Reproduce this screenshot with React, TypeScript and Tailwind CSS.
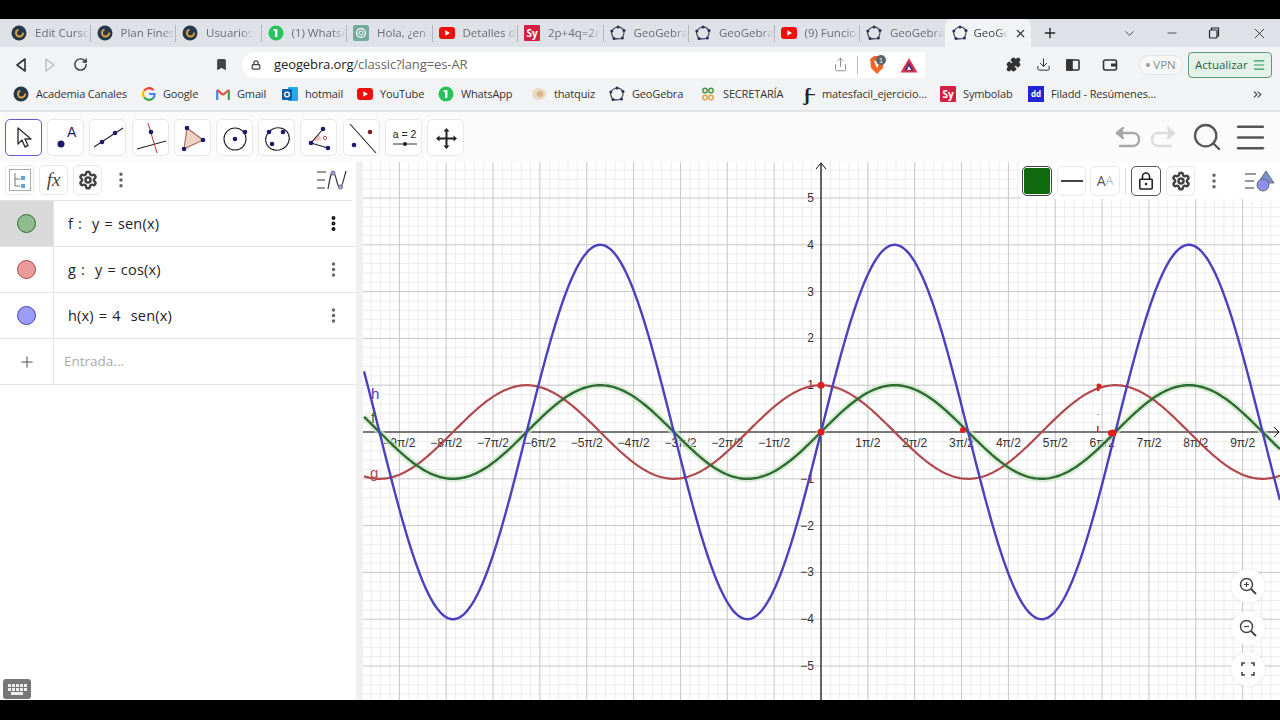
import { ChevronDown, Download, MoreVertical, Plus, Puzzle, RotateCw, Share, X, Minus, Lock, Bookmark, ChevronsRight, Menu, Search, Settings } from 'lucide-react'

const GEO = '#1a1a6e'

function AcademiaIcon() {
  return (
    <svg width="16" height="16" viewBox="0 0 16 16" className="shrink-0">
      <circle cx="8" cy="8" r="7.5" fill="#26384a" />
      <circle cx="8.5" cy="8" r="3.5" fill="none" stroke="#d9a441" strokeWidth="2" strokeDasharray="15 6" />
    </svg>
  )
}

function WhatsappIcon() {
  return (
    <svg width="16" height="16" viewBox="0 0 16 16" className="shrink-0">
      <circle cx="8" cy="8" r="7.5" fill="#25c35a" />
      <rect x="7" y="4" width="2.4" height="8" fill="#fff" />
      <rect x="5.6" y="4" width="3" height="2" fill="#fff" />
    </svg>
  )
}

function ChatIcon() {
  return (
    <svg width="16" height="16" viewBox="0 0 16 16" className="shrink-0">
      <rect width="16" height="16" rx="2" fill="#74aa9c" />
      <circle cx="8" cy="8" r="4.4" fill="none" stroke="#fff" strokeWidth="1.3" />
      <circle cx="8" cy="8" r="2" fill="none" stroke="#fff" strokeWidth="0.9" />
    </svg>
  )
}

function YoutubeIcon() {
  return (
    <svg width="16" height="12" viewBox="0 0 16 12" className="shrink-0">
      <rect width="16" height="12" rx="3" fill="#ee0f0f" />
      <path d="M6.3 3.3 L11 6 L6.3 8.7 Z" fill="#fff" />
    </svg>
  )
}

function SyIcon() {
  return (
    <div className="flex h-4 w-4 shrink-0 items-center justify-center rounded-[1px] bg-[#d41f45] text-[10px] font-bold leading-none text-white">
      Sy
    </div>
  )
}

function GeoIcon() {
  return (
    <svg width="16" height="16" viewBox="0 0 16 16" className="shrink-0">
      <path d="M8 1.8 Q11.5 2 14 5.4 Q14.5 9.5 12.4 13 Q8 14.6 4 13.4 Q1 10 1.8 6 Q4 2.6 8 1.8 Z" fill="none" stroke="#3b3f4a" strokeWidth="1.1" />
      <circle cx="8" cy="1.9" r="1.5" fill="#26305e" />
      <circle cx="14" cy="5.4" r="1.5" fill="#26305e" />
      <circle cx="12.4" cy="13" r="1.5" fill="#26305e" />
      <circle cx="4" cy="13.4" r="1.5" fill="#26305e" />
      <circle cx="1.8" cy="6" r="1.5" fill="#26305e" />
    </svg>
  )
}

function GoogleIcon() {
  return (
    <svg width="14" height="14" viewBox="0 0 14 14" className="shrink-0" fill="none" strokeWidth="2.2">
      <path d="M11.5 3 A6 6 0 0 0 2.2 3.6" stroke="#ea4335" />
      <path d="M2.2 3.6 A6 6 0 0 0 2.2 10.4" stroke="#fbbc05" />
      <path d="M2.2 10.4 A6 6 0 0 0 11 11.4" stroke="#34a853" />
      <path d="M11 11.4 A6 6 0 0 0 12.6 7 L7 7" stroke="#4285f4" />
    </svg>
  )
}

function GmailIcon() {
  return (
    <svg width="14" height="12" viewBox="0 0 14 12" className="shrink-0" fill="none" strokeWidth="2.2">
      <path d="M1.2 12 V2" stroke="#4285f4" />
      <path d="M12.8 12 V2" stroke="#34a853" />
      <path d="M1.2 2 L7 6.8" stroke="#ea4335" />
      <path d="M7 6.8 L12.8 2" stroke="#e0574a" />
    </svg>
  )
}

function OutlookIcon() {
  return (
    <svg width="16" height="16" viewBox="0 0 16 16" className="shrink-0">
      <rect x="6" y="1" width="10" height="14" rx="1" fill="#28a8ea" />
      <rect x="0" y="3" width="10" height="11" rx="1" fill="#0f5ea8" />
      <circle cx="5" cy="8.5" r="2.4" fill="none" stroke="#fff" strokeWidth="1.3" />
    </svg>
  )
}

function QuizIcon() {
  return (
    <svg width="16" height="14" viewBox="0 0 16 14" className="shrink-0">
      <ellipse cx="8" cy="7" rx="7" ry="6" fill="#ecd9c2" />
      <ellipse cx="9" cy="7" rx="3.4" ry="3" fill="#d7b48e" />
    </svg>
  )
}

function SecretariaIcon() {
  return (
    <svg width="16" height="16" viewBox="0 0 16 16" className="shrink-0" fill="none" strokeWidth="1.4">
      <circle cx="5" cy="4.5" r="2.2" stroke="#4a8f3b" />
      <circle cx="11" cy="4.5" r="2.2" stroke="#4a8f3b" />
      <circle cx="5" cy="11.5" r="2.2" stroke="#d9a441" />
      <circle cx="11" cy="11.5" r="2.2" stroke="#d9a441" />
    </svg>
  )
}

function MatesIcon() {
  return <span className="w-4 shrink-0 text-center font-['Liberation_Serif',serif] text-[19px] font-bold leading-none text-[#222]">ʃ̶</span>
}

function FiladdIcon() {
  return (
    <div className="flex h-4 w-4 shrink-0 items-center justify-center bg-[#2323d8] text-[8px] font-bold leading-none text-white">
      dd
    </div>
  )
}

const tabs = [
  { icon: <AcademiaIcon />, label: 'Edit Curso de' },
  { icon: <AcademiaIcon />, label: 'Plan Fines 2' },
  { icon: <AcademiaIcon />, label: 'Usuarios' },
  { icon: <WhatsappIcon />, label: '(1) WhatsApp' },
  { icon: <ChatIcon />, label: 'Hola, ¿en qué' },
  { icon: <YoutubeIcon />, label: 'Detalles del' },
  { icon: <SyIcon />, label: '2p+4q=2r' },
  { icon: <GeoIcon />, label: 'GeoGebra C' },
  { icon: <GeoIcon />, label: 'GeoGebra C' },
  { icon: <YoutubeIcon />, label: '(9) Funcion' },
  { icon: <GeoIcon />, label: 'GeoGebra C' },
]

const bookmarks = [
  { icon: <AcademiaIcon />, label: 'Academia Canales', w: 'w-[129px]' },
  { icon: <GoogleIcon />, label: 'Google', w: 'w-[74px]' },
  { icon: <GmailIcon />, label: 'Gmail', w: 'w-[66px]' },
  { icon: <OutlookIcon />, label: 'hotmail', w: 'w-[75px]' },
  { icon: <YoutubeIcon />, label: 'YouTube', w: 'w-[81px]' },
  { icon: <WhatsappIcon />, label: 'WhatsApp', w: 'w-[93px]' },
  { icon: <QuizIcon />, label: 'thatquiz', w: 'w-[78px]' },
  { icon: <GeoIcon />, label: 'GeoGebra', w: 'w-[91px]' },
  { icon: <SecretariaIcon />, label: 'SECRETARÍA', w: 'w-[99px]' },
  { icon: <MatesIcon />, label: 'matesfacil_ejercicio...', w: 'w-[141px]' },
  { icon: <SyIcon />, label: 'Symbolab', w: 'w-[88px]' },
  { icon: <FiladdIcon />, label: 'Filadd - Resúmenes...', w: 'w-[200px]' },
]

function TabBar() {
  return (
    <div className="flex h-[28px] items-center bg-[#dee1e6] pl-[5px] text-[11.5px] text-[#6a6d72]">
      {tabs.map((t, i) => (
        <div key={i} className="flex h-[17px] w-[85.5px] items-center gap-[8px] overflow-hidden border-r border-[#b4b7bb] pl-[6px]">
          {t.icon}
          <span className="overflow-hidden whitespace-nowrap [mask-image:linear-gradient(to_right,#000_75%,transparent)]">{t.label}</span>
        </div>
      ))}
      <div className="ml-[-1px] flex h-[28px] w-[86px] items-center gap-[6px] rounded-t-[7px] bg-[#f2f3f5] pl-[7px] text-[#444]">
        <GeoIcon />
        <span className="w-[34px] overflow-hidden whitespace-nowrap [mask-image:linear-gradient(to_right,#000_70%,transparent)]">GeoGebra</span>
        <X size={13} strokeWidth={2} className="text-[#333]" />
      </div>
      <Plus size={16} strokeWidth={2} className="ml-[11px] text-[#222]" />
      <ChevronDown size={15} strokeWidth={1.5} className="ml-[64px] text-[#444]" />
      <Minus size={14} strokeWidth={1.3} className="ml-[28px] text-[#222]" />
      <svg width="12" height="12" viewBox="0 0 12 12" className="ml-[29px]" fill="none" stroke="#222" strokeWidth="1.2">
        <rect x="1.5" y="3" width="7.5" height="8" rx="1" />
        <path d="M3.5 3 V1 H10.5 V9 H9" />
      </svg>
      <X size={17} strokeWidth={1.2} className="ml-[31px] text-[#222]" />
    </div>
  )
}

function NavBar() {
  return (
    <div className="flex h-[35px] items-center bg-[#f2f3f5] text-[#333]">
      <svg width="14" height="16" viewBox="0 0 14 16" className="ml-[14px]" fill="none" stroke="#333" strokeWidth="1.6" strokeLinejoin="round">
        <path d="M11 2 L3 8 L11 14 Z" />
      </svg>
      <svg width="14" height="16" viewBox="0 0 14 16" className="ml-[15px]" fill="none" stroke="#bbbdc0" strokeWidth="1.4" strokeLinejoin="round">
        <path d="M3 2 L11 8 L3 14 Z" />
      </svg>
      <RotateCw size={15} strokeWidth={2.2} className="ml-[16px] text-[#333]" />
      <Bookmark size={13} strokeWidth={2} fill="#444" className="ml-[127px] text-[#444]" />
      <div className="ml-[14px] flex h-[26px] w-[683px] shrink-0 items-center rounded-l-[13px] bg-white pl-[9px]">
        <Lock size={10} strokeWidth={3} className="text-[#444]" />
        <span className="ml-[13px] text-[13px] tracking-[-0.1px] text-[#222]">geogebra.org</span>
        <span className="text-[13px] tracking-[-0.1px] text-[#666]">/classic?lang=es-AR</span>
        <Share size={15} strokeWidth={1.3} className="ml-[366px] text-[#777]" />
        <div className="ml-[9px] h-[18px] w-px bg-[#bbb]" />
        <svg width="18" height="20" viewBox="0 0 18 20" className="ml-[10px]">
          <path d="M2 4 L6 1 H12 L16 4 L15 13 L9 19 L3 13 Z" fill="#f0662a" />
          <path d="M6 6 L9 13 L12 6 Z" fill="#fff" />
          <circle cx="13" cy="5" r="5" fill="#5f6368" />
          <text x="13" y="7.5" fontSize="7" fill="#fff" textAnchor="middle" fontFamily="Liberation Sans">1</text>
        </svg>
        <svg width="18" height="16" viewBox="0 0 18 16" className="ml-[14px]">
          <path d="M9 1 L17.5 15.5 H0.5 Z" fill="#d9334a" />
          <path d="M9 5.5 L13.6 13.5 H4.4 Z" fill="#4b2a80" />
          <path d="M9 9 L11 13 H7 Z" fill="#f2f3f5" />
        </svg>
      </div>
      <Puzzle size={15} strokeWidth={2} fill="#333" className="ml-[81px]" />
      <Download size={15} strokeWidth={1.6} className="ml-[15px]" />
      <svg width="14" height="14" viewBox="0 0 14 14" className="ml-[15px]" fill="none" stroke="#333" strokeWidth="1.6">
        <rect x="1" y="2" width="12" height="10" rx="1" />
        <rect x="1" y="2" width="5" height="10" fill="#333" />
      </svg>
      <svg width="16" height="14" viewBox="0 0 16 14" className="ml-[22px]" fill="none" stroke="#333" strokeWidth="1.6">
        <rect x="1.5" y="2" width="13" height="10" rx="2" />
        <path d="M9 7 H14.5" strokeWidth="3" />
      </svg>
      <div className="ml-[21px] flex h-[20px] w-[44px] items-center justify-center gap-[3px] rounded-full border border-[#e2e3e5] bg-[#f7f7f8] text-[11.5px] text-[#8a8d91]">
        <span className="h-[4px] w-[4px] rounded-full bg-[#9a9da1]" />
        VPN
      </div>
      <div className="ml-[5px] flex h-[26px] w-[84px] items-center justify-between rounded-[4px] border border-[#5f9a78] bg-[#e3f1e8] pl-[6px] pr-[5px] text-[11.5px] text-[#2f5e44]">
        Actualizar
        <Menu size={14} strokeWidth={2} className="text-[#2d9b5c]" />
      </div>
    </div>
  )
}

function BookmarkBar() {
  return (
    <div className="flex h-[28px] items-center bg-[#f2f3f5] pb-[4px] pl-[13px] text-[11px] tracking-[-0.15px] text-[#333]">
      {bookmarks.map((b, i) => (
        <div key={i} className={`flex items-center gap-[7px] ${b.w} shrink-0`}>
          {b.icon}
          <span className="whitespace-nowrap">{b.label}</span>
        </div>
      ))}
      <ChevronsRight size={13} strokeWidth={2} className="ml-[23px] text-[#444]" />
    </div>
  )
}

function Dot({ cx, cy, r = 3, fill = GEO }: { cx: number; cy: number; r?: number; fill?: string }) {
  return <circle cx={cx} cy={cy} r={r} fill={fill} />
}

function ToolIcon({ n }: { n: number }) {
  const line = { stroke: '#222', strokeWidth: 1.1, fill: 'none' }
  return (
    <svg width="37" height="37" viewBox="0 0 37 37">
      {n === 0 && <path d="M12 8 L12 24 L16 20 L19 27 L22 25.5 L19 19 L25 19 Z" fill="#fff" stroke="#333" strokeWidth="1.4" strokeLinejoin="round" />}
      {n === 1 && (
        <>
          <Dot cx={13} cy={24} r={3.5} />
          <text x="19" y="17" fontSize="14" fill={GEO} fontFamily="Liberation Sans">A</text>
        </>
      )}
      {n === 2 && (
        <>
          <path d="M4 27 L33 8" {...line} />
          <Dot cx={12} cy={22} r={2.3} />
          <Dot cx={25} cy={13} r={2.3} />
        </>
      )}
      {n === 3 && (
        <>
          <path d="M4 29 L33 21" {...line} />
          <path d="M15 3 L24 33" stroke="#c0504d" strokeWidth="1.1" />
          <Dot cx={18} cy={12} r={2.3} />
        </>
      )}
      {n === 4 && (
        <>
          <path d="M12 8 L28 20 L9 29 Z" fill="#eed2c4" stroke="#a9674f" strokeWidth="1.1" />
          <Dot cx={12} cy={8} r={2.3} />
          <Dot cx={28} cy={20} r={2.3} />
          <Dot cx={9} cy={29} r={2.3} />
        </>
      )}
      {n === 5 && (
        <>
          <circle cx="18" cy="19" r="11" {...line} />
          <Dot cx={18} cy={19} r={2.3} />
          <Dot cx={28} cy={12} r={2.3} />
        </>
      )}
      {n === 6 && (
        <>
          <ellipse cx="18.5" cy="19" rx="12" ry="11" transform="rotate(-25 18.5 19)" {...line} />
          <Dot cx={10} cy={12} r={2.3} />
          <Dot cx={24} cy={12} r={2.3} />
          <Dot cx={13} cy={24} r={2.3} />
        </>
      )}
      {n === 7 && (
        <>
          <path d="M10 22 L20 20 A10 10 0 0 0 18 14 Z" fill="#f4c0bc" />
          <path d="M22 9 L10 23 L27 28" {...line} />
          <circle cx="24" cy="18" r="1.7" fill="none" stroke="#c0504d" strokeWidth="1" />
          <Dot cx={22} cy={9} r={2.3} />
          <Dot cx={10} cy={23} r={2.3} />
          <Dot cx={27} cy={28} r={2.3} />
        </>
      )}
      {n === 8 && (
        <>
          <path d="M6 4 L32 33" {...line} />
          <Dot cx={26} cy={12} r={2.3} fill="#7d1f2a" />
          <Dot cx={10} cy={25} r={2.3} />
        </>
      )}
      {n === 9 && (
        <>
          <text x="18.5" y="18" fontSize="10.5" fill="#222" textAnchor="middle" fontFamily="Liberation Sans">a = 2</text>
          <path d="M7 24 H31" stroke="#333" strokeWidth="1" />
          <circle cx="19" cy="24" r="2" fill="#222" />
        </>
      )}
      {n === 10 && (
        <path d="M18.5 8 L21.5 11.5 H19.5 V17.5 H25.5 V15.5 L29 18.5 L25.5 21.5 V19.5 H19.5 V25.5 H21.5 L18.5 29 L15.5 25.5 H17.5 V19.5 H11.5 V21.5 L8 18.5 L11.5 15.5 V17.5 H17.5 V11.5 H15.5 Z" fill="#222" />
      )}
    </svg>
  )
}

function Toolbar() {
  return (
    <div className="flex h-[52px] items-center border-t-2 border-[#e4e4e4] bg-[#fbfbfb] pl-[5px]">
      <div className="flex gap-[5.2px]">
        {[0, 1, 2, 3, 4, 5, 6, 7, 8, 9, 10].map((n) => (
          <div
            key={n}
            className={`h-[37px] w-[37px] rounded-[5px] border bg-white ${n === 0 ? 'border-[#6557d2]' : 'border-[#e8e8e8]'}`}
          >
            <ToolIcon n={n} />
          </div>
        ))}
      </div>
      <div className="ml-auto flex items-center pr-[11px]">
        <svg width="30" height="24" viewBox="0 0 30 24" fill="none" strokeWidth="2.4" strokeLinecap="round" strokeLinejoin="round">
          <path d="M3 8 H19 C27 8 27 21 19 21 H6" stroke="#a8a8a8" />
          <path d="M9 3 L3 8 L9 13" fill="#a8a8a8" stroke="#a8a8a8" />
        </svg>
        <svg width="30" height="24" viewBox="0 0 30 24" className="ml-[4px]" fill="none" strokeWidth="2.4" strokeLinecap="round" strokeLinejoin="round">
          <path d="M26 8 H10 C2 8 2 21 10 21 H23" stroke="#dcdcdc" />
          <path d="M20 3 L26 8 L20 13" fill="#dcdcdc" stroke="#dcdcdc" />
        </svg>
        <Search size={32} strokeWidth={1.7} className="ml-[13px] text-[#555]" />
        <Menu size={37} strokeWidth={1.7} className="ml-[9px] text-[#555]" />
      </div>
    </div>
  )
}

function AlgebraHead() {
  return (
    <div className="mr-[4px] flex h-[39px] items-center border-b border-[#e2e2e2] pb-[2px] pl-[5px]">
      <div className="flex h-[30px] w-[29px] items-center justify-center rounded-[5px] border border-[#e8e8e8]">
        <svg width="22" height="22" viewBox="0 0 22 22" fill="none">
          <rect x="0.5" y="0.5" width="21" height="21" stroke="#aaa" />
          <path d="M6 4 V17 H11 M6 10 H11" stroke="#777" />
          <rect x="12" y="7" width="4" height="4" fill="#5fa5dc" />
          <rect x="12" y="15" width="4" height="4" fill="#5fa5dc" />
        </svg>
      </div>
      <div className="ml-[5px] flex h-[30px] w-[29px] items-center justify-center rounded-[5px] border border-[#e8e8e8] font-['Liberation_Serif',serif] text-[19px] italic text-[#444]">
        fx
      </div>
      <div className="ml-[5px] flex h-[30px] w-[29px] items-center justify-center rounded-[5px] border border-[#e8e8e8]">
        <Settings size={20} strokeWidth={3} className="text-[#444]" />
      </div>
      <MoreVertical size={20} strokeWidth={2.2} className="ml-[9px] text-[#666]" />
      <svg width="30" height="24" viewBox="0 0 30 24" className="ml-auto mr-[5px]" fill="none">
        <path d="M0 4 H9 M0 12 H8 M0 20 H8" stroke="#999" strokeWidth="2" />
        <path d="M11 21 C13 10 14 4 16 4 C19 4 20 20 23 20 C25 20 27 10 29 3" stroke="#333" strokeWidth="1.2" />
        <circle cx="16" cy="5" r="2.2" fill="#9a9ad8" stroke="#555" strokeWidth="0.5" />
        <circle cx="23.5" cy="19" r="2.2" fill="#9a9ad8" stroke="#555" strokeWidth="0.5" />
      </svg>
    </div>
  )
}

function Row({ color, border, active, text }: { color: string; border: string; active?: boolean; text: string }) {
  return (
    <div className="flex h-[46px] items-stretch border-b border-[#e4e4e4]">
      <div className={`flex w-[54px] shrink-0 items-center justify-center border-r border-[#e4e4e4] ${active ? 'bg-[#d9d9d9]' : ''}`}>
        <div className={`h-[19px] w-[19px] rounded-full border ${color} ${border}`} />
      </div>
      <div className="flex flex-1 items-center justify-between pl-[14px] pr-[13px] font-['Open_Sans',sans-serif] text-[14.5px] tracking-[0.2px] text-[#222] [word-spacing:1px]">
        <span className="whitespace-pre">{text}</span>
        <MoreVertical size={19} strokeWidth={active ? 3 : 2.4} className={active ? 'text-[#111]' : 'text-[#666]'} />
      </div>
    </div>
  )
}

function AlgebraPanel() {
  return (
    <div className="flex w-[363px] shrink-0 flex-col">
      <div className="relative flex flex-1 flex-col border-r-[7px] border-[#f0f0f0] bg-white">
        <AlgebraHead />
        <Row color="bg-[#8fbc8f]" border="border-[#2e6b30]" active text="f :  y = sen(x)" />
        <Row color="bg-[#eb9a9a]" border="border-[#b04848]" text="g :  y = cos(x)" />
        <Row color="bg-[#9a9cf5]" border="border-[#4a3fbf]" text="h(x) = 4  sen(x)" />
        <div className="flex h-[46px] items-stretch border-b border-[#e4e4e4]">
          <div className="flex w-[54px] shrink-0 items-center justify-center border-r border-[#e4e4e4]">
            <Plus size={18} strokeWidth={1.4} className="text-[#555]" />
          </div>
          <div className="flex flex-1 items-center pl-[10px] font-['Open_Sans',sans-serif] text-[13.5px] text-[#aaa]">Entrada...</div>
        </div>
        <div className="absolute bottom-[1px] left-[3px] flex h-[20px] w-[28px] flex-col items-center justify-center gap-[1px] rounded-[3px] bg-[#777]">
          <div className="grid grid-cols-5 gap-[1px]">
            {Array.from({ length: 10 }).map((_, i) => (
              <span key={i} className="h-[3px] w-[3px] bg-[#eee]" />
            ))}
          </div>
          <span className="h-[3px] w-[12px] bg-[#eee]" />
        </div>
      </div>
    </div>
  )
}

const W = 917
const H = 538
const OX = 458
const OY = 270
const UX = 46.85
const UY = 46.8

function curve(fn: (x: number) => number) {
  const pts: string[] = []
  for (let px = 1; px <= W; px += 2) {
    const x = (px - OX) / UX
    pts.push(`${px},${(OY - fn(x) * UY).toFixed(1)}`)
  }
  return 'M' + pts.join(' L')
}

function Graph() {
  const minorX: number[] = []
  const minorY: number[] = []
  const majorX: number[] = []
  const majorY: number[] = []
  for (let k = -50; k <= 50; k++) {
    const x = OX + (k * UX) / 5
    if (x >= 0 && x <= W) (k % 5 === 0 ? majorX : minorX).push(x)
    const y = OY + (k * UY) / 5
    if (y >= 0 && y <= H) (k % 5 === 0 ? majorY : minorY).push(y)
  }
  const xLabels = [-9, -8, -7, -6, -5, -4, -3, -2, -1, 1, 2, 3, 4, 5, 6, 7, 8, 9]
  const yLabels = [5, 4, 3, 2, 1, -1, -2, -3, -4, -5]
  return (
    <svg width={W} height={H} viewBox={`0 0 ${W} ${H}`} className="absolute inset-0 font-['Liberation_Sans',sans-serif]">
      {minorX.map((x) => <path key={x} d={`M${x} 0 V${H}`} stroke="#ececec" strokeWidth="1" />)}
      {minorY.map((y) => <path key={y} d={`M0 ${y} H${W}`} stroke="#ececec" strokeWidth="1" />)}
      {majorX.map((x) => <path key={x} d={`M${x} 0 V${H}`} stroke="#c6c6c6" strokeWidth="1" />)}
      {majorY.map((y) => <path key={y} d={`M0 ${y} H${W}`} stroke="#c6c6c6" strokeWidth="1" />)}
      <path d={`M0 ${OY} H${W - 1}`} stroke="#111" strokeWidth="1.2" />
      <path d={`M${OX} 2 V${H}`} stroke="#111" strokeWidth="1.2" />
      <path d={`M${W - 6} ${OY - 5} L${W - 1} ${OY} L${W - 6} ${OY + 5}`} stroke="#111" fill="none" />
      <path d={`M${OX - 5} 7 L${OX} 1 L${OX + 5} 7`} stroke="#111" fill="none" />
      {xLabels.map((k) => (
        <text key={k} x={OX + k * UX} y={OY + 15} fontSize="12" fill="#333" textAnchor="middle">
          {k < 0 ? `−${-k}π/2` : `${k}π/2`}
        </text>
      ))}
      {yLabels.map((k) => (
        <text key={k} x={OX - 7} y={OY - k * UY + 4} fontSize="12" fill="#333" textAnchor="end">
          {k < 0 ? `−${-k}` : k}
        </text>
      ))}
      <path d={curve(Math.sin)} stroke="#cfe8c9" strokeWidth="7" fill="none" opacity="0.7" />
      <path d={curve(Math.cos)} stroke="#b04a4e" strokeWidth="2.2" fill="none" />
      <path d={curve(Math.sin)} stroke="#2e6b35" strokeWidth="2.4" fill="none" />
      <path d={curve((x) => 4 * Math.sin(x))} stroke="#4b40bd" strokeWidth="2.4" fill="none" />
      <text x="8" y="237" fontSize="15" fill="#4b40bd">h</text>
      <text x="8" y="261" fontSize="15" fill="#2e6b35">f</text>
      <text x="7" y="316" fontSize="15" fill="#b04a4e">g</text>
      <circle cx={OX} cy={OY - UY} r="3.5" fill="#e02020" />
      <circle cx={OX} cy={OY} r="3.5" fill="#e02020" />
      <circle cx={600} cy={OY - 2} r="3" fill="#e02020" />
      <circle cx={736} cy={224} r="2.5" fill="#e02020" />
      <rect x={734} y={222} width="2.5" height="7" fill="#e02020" />
      <rect x={734.5} y={252} width="1" height="1" fill="#e02020" />
      <rect x={734} y={264} width="1.5" height="6" fill="#e02020" />
      <rect x={745} y={268} width="7" height="6" rx="2.5" fill="#e02020" />
      <circle cx={750} cy={271} r="3.5" fill="#e02020" />
    </svg>
  )
}

function ZoomBtn({ children }: { children: React.ReactNode }) {
  return (
    <div className="flex h-[34px] w-[34px] items-center justify-center rounded-full bg-white shadow-[0_0_3px_rgba(0,0,0,0.12)]">
      {children}
    </div>
  )
}

function GraphicsPanel() {
  return (
    <div className="relative flex-1 overflow-hidden bg-white">
      <Graph />
      <div className="absolute right-0 top-0 flex h-[37px] w-[260px] items-center bg-white pl-[2px]">
        <div className="flex h-[30px] w-[30px] items-center justify-center rounded-[5px] border border-[#444]">
          <div className="h-[26px] w-[26px] rounded-[2px] bg-[#0f6a0f]" />
        </div>
        <div className="ml-[5px] flex h-[30px] w-[29px] items-center justify-center rounded-[5px] border border-[#e8e8e8]">
          <div className="h-[2px] w-[22px] bg-[#444]" />
        </div>
        <div className="ml-[4px] flex h-[30px] w-[30px] items-center justify-center rounded-[5px] border border-[#e8e8e8] text-[14px] text-[#555]">
          A<span className="text-[12px] text-[#bbb]">A</span>
        </div>
        <div className="ml-[5px] h-[26px] w-px bg-[#ddd]" />
        <div className="ml-[5px] flex h-[30px] w-[30px] items-center justify-center rounded-[5px] border border-[#555]">
          <svg width="16" height="20" viewBox="0 0 18 22" fill="none" stroke="#222" strokeWidth="1.8">
            <rect x="2" y="9" width="14" height="11" rx="1" />
            <path d="M5 9 V6 A4 4 0 0 1 13 6 V9" />
            <circle cx="9" cy="14.5" r="1.4" fill="#222" stroke="none" />
          </svg>
        </div>
        <div className="ml-[5px] flex h-[30px] w-[29px] items-center justify-center rounded-[5px] border border-[#e8e8e8]">
          <Settings size={20} strokeWidth={3} className="text-[#444]" />
        </div>
        <MoreVertical size={20} strokeWidth={2.2} className="ml-[9px] text-[#666]" />
        <svg width="30" height="24" viewBox="0 0 30 24" className="ml-[21px]">
          <path d="M0 5 H11 M0 12 H9 M0 19 H9" stroke="#999" strokeWidth="2" />
          <path d="M21 2 L29 14 H13 Z" fill="#7c8fd0" stroke="#555" strokeWidth="0.8" />
          <circle cx="18" cy="16" r="6" fill="#8f8ff0" stroke="#555" strokeWidth="0.8" />
        </svg>
      </div>
      <div className="absolute bottom-[14px] right-[15px] flex flex-col gap-[7.5px]">
        <ZoomBtn>
          <svg width="18" height="18" viewBox="0 0 18 18" fill="none" stroke="#444" strokeWidth="1.5">
            <circle cx="7.5" cy="7.5" r="6" />
            <path d="M12 12 L17 17" strokeWidth="2" />
            <path d="M5 7.5 H10 M7.5 5 V10" strokeWidth="1.2" />
          </svg>
        </ZoomBtn>
        <ZoomBtn>
          <svg width="18" height="18" viewBox="0 0 18 18" fill="none" stroke="#444" strokeWidth="1.5">
            <circle cx="7.5" cy="7.5" r="6" />
            <path d="M12 12 L17 17" strokeWidth="2" />
            <path d="M5 7.5 H10" strokeWidth="1.2" />
          </svg>
        </ZoomBtn>
        <ZoomBtn>
          <svg width="14" height="14" viewBox="0 0 14 14" fill="none" stroke="#444" strokeWidth="1.6">
            <path d="M1 4 V1 H4 M10 1 H13 V4 M13 10 V13 H10 M4 13 H1 V10" />
          </svg>
        </ZoomBtn>
      </div>
    </div>
  )
}

export default function App() {
  return (
    <div className="flex h-[720px] w-[1280px] flex-col overflow-hidden bg-black font-['Open_Sans',sans-serif]">
      <div className="h-[19px] shrink-0 bg-black" />
      <TabBar />
      <NavBar />
      <BookmarkBar />
      <Toolbar />
      <div className="flex h-[538px] shrink-0">
        <AlgebraPanel />
        <GraphicsPanel />
      </div>
      <div className="flex-1 bg-black" />
    </div>
  )
}
